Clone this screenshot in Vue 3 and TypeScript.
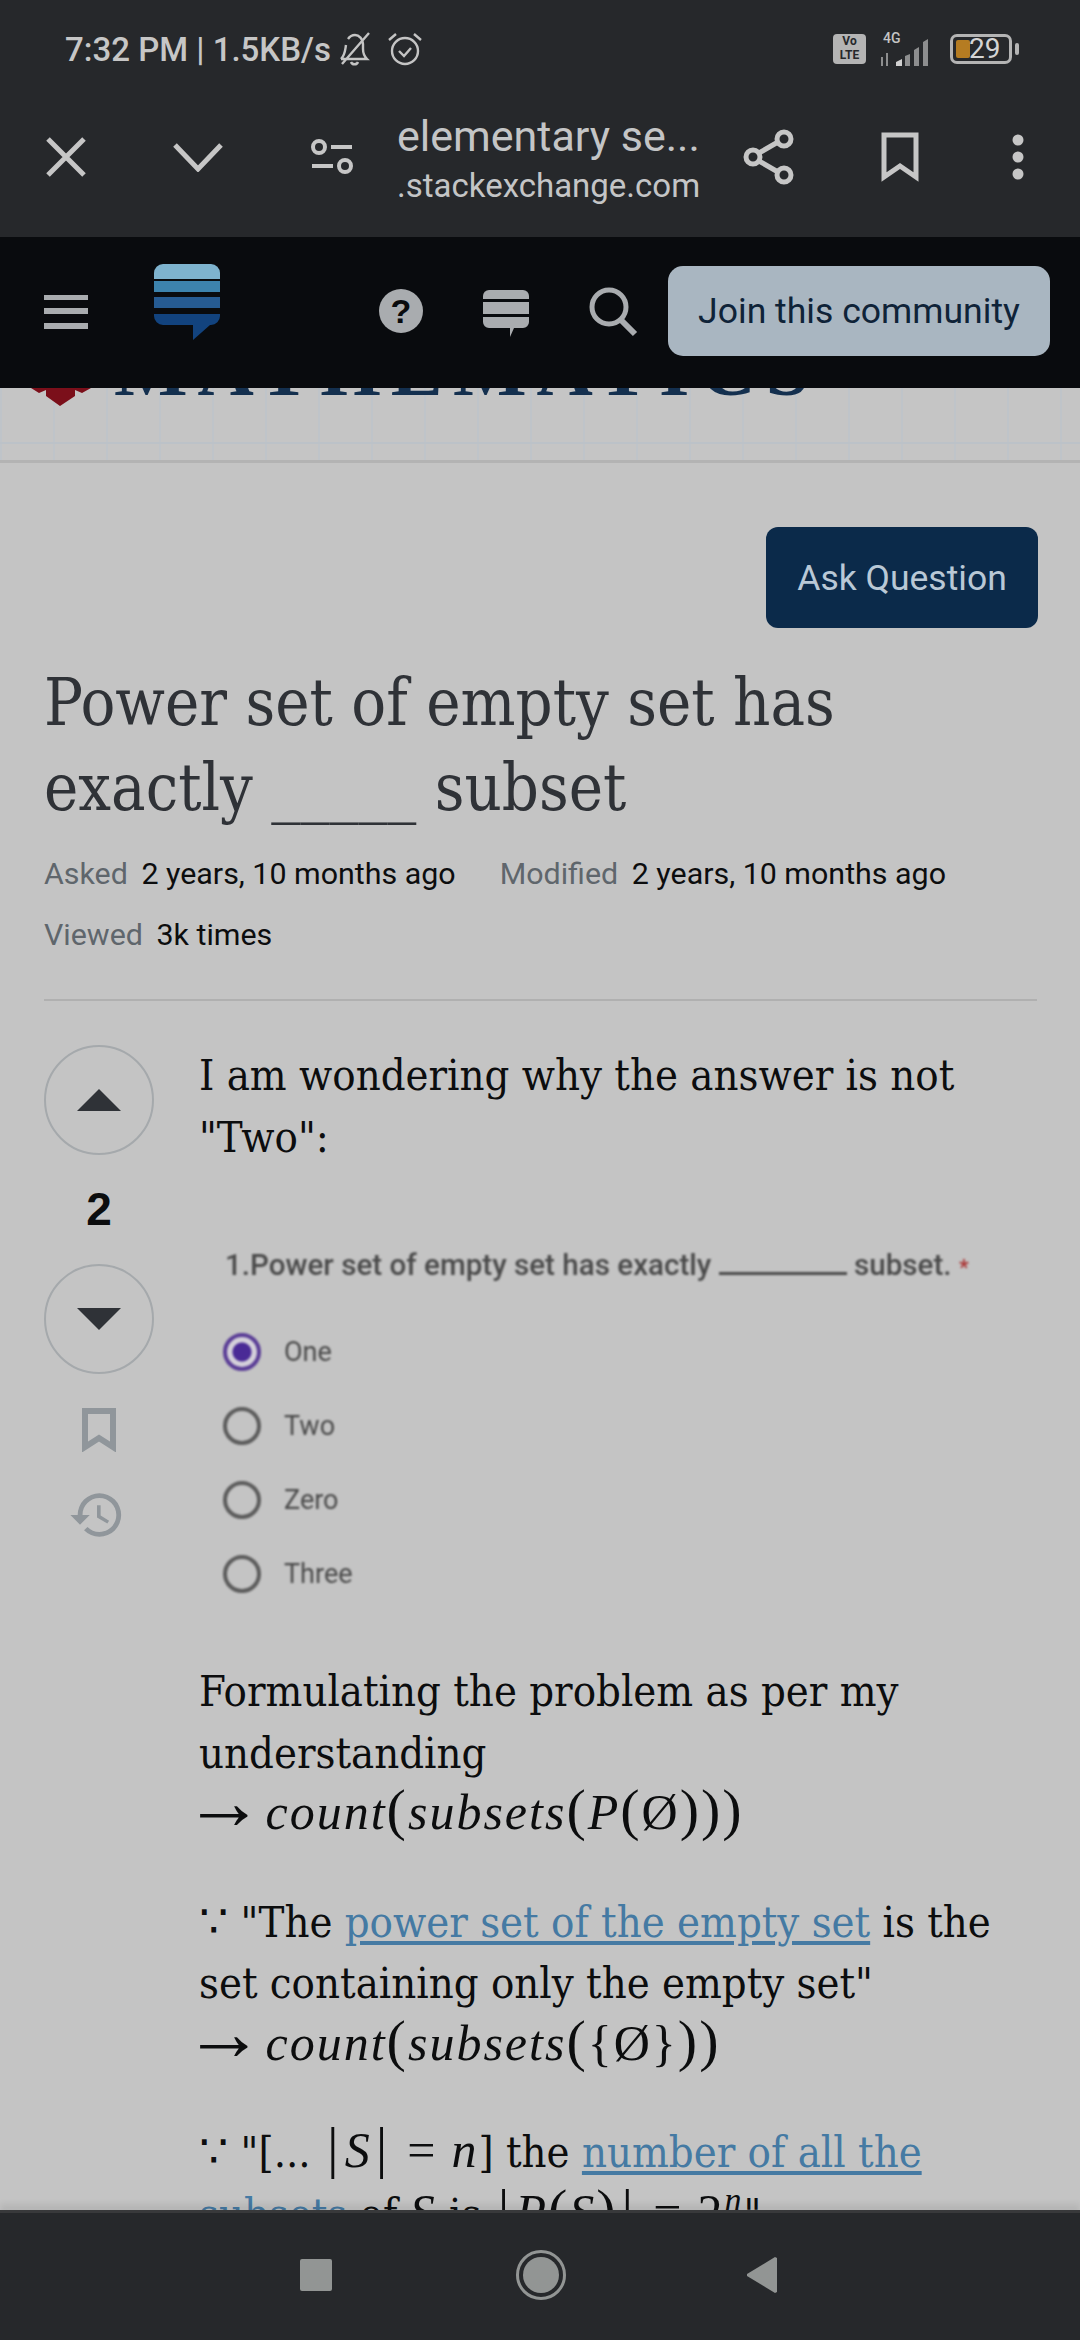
<template>
  <div class="page">
    <header class="browser">
      <div class="status">
        <span class="clock">7:32 PM | 1.5KB/s</span>
        <svg class="st-bell" width="34" height="36" viewBox="0 0 34 36" fill="none" stroke="#c4c4c4" stroke-width="2.4">
          <path d="M3 28h26c-3-3-4-6-4-10V13c0-5-4-9-8-9-3 0-5 1-7 4M8 14c-1 6-1 10-5 14M31 2 4 33" />
          <path d="M13 31c1 3 6 3 7 0" />
        </svg>
        <svg class="st-alarm" width="36" height="36" viewBox="0 0 36 36" fill="none" stroke="#c4c4c4" stroke-width="2.4">
          <circle cx="18" cy="20" r="13" />
          <path d="M12 20l5 5 7-8M2 9l7-6M34 9l-7-6" />
        </svg>
        <div class="st-right">
          <span class="volte">Vo<br />LTE</span>
          <svg width="58" height="36" viewBox="0 0 58 36" fill="#8d8e8f">
            <text x="5" y="12" class="four-g">4G</text>
            <path d="M3 26h2v9H3zM8 22h2v13H8z" />
            <path d="M18 35v-4l6-3v7z" fill="#d0d0d0" />
            <path d="M27 35V25l5-2v12zM36 35V19l5-3v19zM45 35V11l5-3v27z" />
          </svg>
          <div class="battery">
            <span class="battery-fill"></span>
            <span class="battery-num">29</span>
          </div>
          <span class="battery-tip"></span>
        </div>
      </div>
      <div class="toolbar">
        <svg class="tb-close" width="40" height="40" viewBox="0 0 40 40" stroke="#c6c6c6" stroke-width="5">
          <path d="M2 2l36 36M38 2 2 38" />
        </svg>
        <svg class="tb-chev" width="50" height="30" viewBox="0 0 50 30" fill="none" stroke="#c6c6c6" stroke-width="5">
          <path d="M2 3l23 24L48 3" />
        </svg>
        <svg class="tb-tune" width="42" height="36" viewBox="0 0 42 36" fill="none" stroke="#c6c6c6" stroke-width="4">
          <circle cx="8" cy="8" r="6" />
          <circle cx="34" cy="27" r="6" />
          <path d="M20 8h21M1 27h21" />
        </svg>
        <div class="tb-title">
          <div class="tb-main">elementary se...</div>
          <div class="tb-sub">.stackexchange.com</div>
        </div>
        <svg class="tb-share" width="52" height="56" viewBox="0 0 52 56" fill="none" stroke="#c6c6c6" stroke-width="5">
          <circle cx="41" cy="10" r="7" />
          <circle cx="41" cy="46" r="7" />
          <circle cx="10" cy="28" r="7" />
          <path d="M16 24l19-11M16 32l19 11" />
        </svg>
        <svg class="tb-mark" width="38" height="50" viewBox="0 0 38 50" fill="none" stroke="#c6c6c6" stroke-width="5">
          <path d="M3 3h32v42L19 34 3 45z" />
        </svg>
        <svg class="tb-dots" width="14" height="46" viewBox="0 0 14 46" fill="#c6c6c6">
          <circle cx="7" cy="6" r="5.5" />
          <circle cx="7" cy="23" r="5.5" />
          <circle cx="7" cy="40" r="5.5" />
        </svg>
      </div>
    </header>

    <nav class="site-nav">
      <svg class="nav-burger" width="44" height="34" viewBox="0 0 44 34" fill="#a9acaf">
        <rect y="0" width="44" height="5" />
        <rect y="13" width="44" height="6" />
        <rect y="28" width="44" height="6" />
      </svg>
      <svg class="nav-logo" width="66" height="76" viewBox="0 0 66 76">
        <path d="M0 9a9 9 0 0 1 9-9h48a9 9 0 0 1 9 9v6H0z" fill="#7eb3ce" />
        <rect y="17" width="66" height="11" fill="#3d83ad" />
        <rect y="33" width="66" height="11" fill="#265b92" />
        <path d="M0 50h66v2a9 9 0 0 1-9 9h-1L39 76V61H9a9 9 0 0 1-9-9z" fill="#12437e" />
      </svg>
      <svg class="nav-help" width="44" height="44" viewBox="0 0 44 44">
        <circle cx="22" cy="22" r="22" fill="#a9acaf" />
        <text x="22" y="34" class="help-mark">?</text>
      </svg>
      <svg class="nav-chat" width="46" height="48" viewBox="0 0 46 48" fill="#a9acaf">
        <path d="M0 7a6 6 0 0 1 6-6h34a6 6 0 0 1 6 6v3H0z" />
        <rect y="13" width="46" height="12" />
        <path d="M0 28h46v5a6 6 0 0 1-6 6h-9l-4 9v-9H6a6 6 0 0 1-6-6z" />
      </svg>
      <svg class="nav-search" width="50" height="50" viewBox="0 0 50 50" fill="none" stroke="#a9acaf" stroke-width="5">
        <circle cx="20" cy="20" r="17" />
        <path d="M31 32l15 15" stroke-width="6" />
      </svg>
      <button class="join">Join this community</button>
    </nav>

    <main class="scroll">
      <div class="band">
        <svg class="band-mark" width="60" height="18" viewBox="0 0 60 18">
          <path d="M0 0h60l-9 5-7-3v6L29 18 15 8V2L8 5z" fill="#7b0f1a" />
        </svg>
        <span class="band-name">MATHEMATICS</span>
      </div>

      <div class="ask-row">
        <button class="ask">Ask Question</button>
      </div>

      <h1 class="title">Power set of empty set has exactly _____ subset</h1>

      <div class="meta">
        <div class="meta-line">
          <span class="meta-item"><span class="meta-label">Asked</span> 2 years, 10 months ago</span>
          <span class="meta-item"><span class="meta-label">Modified</span> 2 years, 10 months ago</span>
        </div>
        <div class="meta-line">
          <span class="meta-item"><span class="meta-label">Viewed</span> 3k times</span>
        </div>
      </div>

      <div class="post">
        <aside class="votes">
          <div class="vote-btn">
            <span class="arrow-up"></span>
          </div>
          <div class="score">2</div>
          <div class="vote-btn">
            <span class="arrow-down"></span>
          </div>
          <svg class="side-mark" width="34" height="44" viewBox="0 0 34 44" fill="none" stroke="#90969b" stroke-width="6">
            <path d="M3 3h28v36L17 30 3 39z" />
          </svg>
          <svg class="side-hist" width="58" height="52" viewBox="0 1.5 24 21" fill="#90969b">
            <path d="M13 3a9 9 0 0 0-9 9H1l3.89 3.89.07.14L9 12H6c0-3.87 3.13-7 7-7s7 3.13 7 7-3.13 7-7 7c-1.93 0-3.68-.79-4.94-2.06l-1.42 1.42A8.954 8.954 0 0 0 13 21a9 9 0 0 0 0-18zm-1 5v5l4.28 2.54.72-1.21-3.5-2.08V8H12z" />
          </svg>
        </aside>

        <div class="body">
          <p>I am wondering why the answer is not "Two":</p>

          <div class="shot">
            <div class="shot-q">
              1.Power set of empty set has exactly <span class="blank"></span> subset. <span class="req">*</span>
            </div>
            <div class="shot-opts">
              <div v-for="opt in options" :key="opt" class="opt">
                <span :class="['radio', { on: opt === 'One' }]"></span>
                <span>{{ opt }}</span>
              </div>
            </div>
          </div>

          <p>
            Formulating the problem as per my understanding<br />
            <span class="math"><span class="arrow">→</span> count<span class="bp">(</span>subsets<span class="bp">(</span>P<span class="bp">(</span><span class="up">Ø</span><span class="bp">)))</span></span>
          </p>

          <p>
            <span class="because">∵</span> "The <a class="link">power set of the empty set</a> is the set containing only the empty set"<br />
            <span class="math"><span class="arrow">→</span> count<span class="bp">(</span>subsets<span class="bp">(</span><span class="up">{Ø}</span><span class="bp">))</span></span>
          </p>

          <p>
            <span class="because">∵</span> "[... <span class="math"><span class="bar">|</span>S<span class="bar">|</span><span class="up eq">=</span>n</span>] the <a class="link">number of all the subsets</a> of <span class="math">S</span> is <span class="math"><span class="bar">|</span>P<span class="bp">(</span>S<span class="bp">)</span><span class="bar">|</span><span class="up eq">=</span><span class="up">2</span><sup>n</sup></span>"
          </p>
        </div>
      </div>
    </main>

    <footer class="sys-nav">
      <span class="sys-square"></span>
      <span class="sys-home"><span></span></span>
      <svg width="32" height="36" viewBox="0 0 32 36" fill="#929594">
        <path d="M31 1v34l-2 1L1 19v-2L29 0z" />
      </svg>
    </footer>
  </div>
</template>

<script setup lang="ts">
const options: string[] = ['One', 'Two', 'Zero', 'Three']
</script>

<style>
html,
body {
  margin: 0;
  background: #c4c4c4;
}
</style>

<style scoped>
.page {
  width: 1080px;
  height: 2340px;
  display: flex;
  flex-direction: column;
  overflow: hidden;
  background: #c4c4c4;
  font-family: Roboto, sans-serif;
}

.browser {
  height: 237px;
  background: #26282b;
  flex-shrink: 0;
}

.status {
  height: 90px;
  padding: 8px 0 0 65px;
  box-sizing: border-box;
  display: flex;
  align-items: center;
  color: #c6c6c6;
}

.clock {
  font-size: 33px;
  font-weight: 500;
  white-space: nowrap;
  width: 270px;
}

.st-bell {
  margin-left: 3px;
}

.st-alarm {
  margin-left: 15px;
}

.st-right {
  margin-left: auto;
  margin-right: 61px;
  display: flex;
  align-items: center;
}

.volte {
  width: 33px;
  height: 30px;
  background: #b4b4b4;
  border-radius: 4px;
  color: #26282b;
  font-size: 12px;
  line-height: 14px;
  font-weight: 700;
  text-align: center;
  margin-right: 12px;
}

.four-g {
  font: 500 14px Roboto, sans-serif;
  fill: #c4c4c4;
}

.battery {
  position: relative;
  width: 56px;
  height: 24px;
  border: 3px solid #b4b4b4;
  border-radius: 7px;
  margin-left: 14px;
}

.battery-fill {
  position: absolute;
  left: 3px;
  top: 3px;
  bottom: 3px;
  width: 14px;
  background: #b57c22;
  border-radius: 2px;
}

.battery-num {
  position: absolute;
  left: 16px;
  top: -3px;
  font-size: 28px;
  line-height: 30px;
  color: #d4d4d4;
}

.battery-tip {
  width: 4px;
  height: 12px;
  margin-left: 3px;
  background: #b4b4b4;
  border-radius: 2px;
}

.toolbar {
  height: 147px;
  display: flex;
  align-items: center;
  padding-bottom: 14px;
  box-sizing: border-box;
}

.tb-close {
  margin-left: 46px;
}

.tb-chev {
  margin-left: 87px;
}

.tb-tune {
  margin-left: 88px;
}

.tb-title {
  margin-left: 44px;
  width: 346px;
  padding-top: 3px;
  color: #c4c5c6;
}

.tb-main {
  font-size: 43px;
  line-height: 52px;
  white-space: nowrap;
}

.tb-sub {
  font-size: 33px;
  line-height: 40px;
  margin-top: 4px;
  white-space: nowrap;
}

.tb-mark {
  margin-left: 86px;
}

.tb-dots {
  margin-left: 92px;
}

.site-nav {
  height: 151px;
  flex-shrink: 0;
  background: #090b0e;
  display: flex;
  align-items: center;
  box-sizing: border-box;
  padding-bottom: 2px;
}

.nav-burger {
  margin-left: 44px;
}

.nav-logo {
  margin-left: 66px;
  margin-top: -20px;
}

.nav-help {
  margin-left: 159px;
  margin-top: -2px;
}

.help-mark {
  font: 700 34px "Liberation Sans", sans-serif;
  fill: #090b0e;
  text-anchor: middle;
}

.nav-chat {
  margin-left: 60px;
  margin-top: 2px;
}

.nav-search {
  margin-left: 60px;
}

.join {
  margin-left: 29px;
  margin-top: -2px;
  width: 382px;
  height: 90px;
  border: 0;
  border-radius: 15px;
  background: #a9b6c1;
  color: #0f2338;
  font: 400 35.6px Roboto, sans-serif;
  padding: 0;
}

.scroll {
  flex: 1;
  min-height: 0;
  overflow: hidden;
}

.band {
  height: 72px;
  box-sizing: content-box;
  overflow: hidden;
  border-bottom: 3px solid #b3b3b3;
  display: flex;
  align-items: flex-start;
  background-color: #c5c5c5;
  background-image:
    linear-gradient(#bcc2c8, #bcc2c8),
    repeating-linear-gradient(90deg, #bfc4c9 0 2px, transparent 2px 53px);
  background-size: 100% 2px, 100% 100%;
  background-position: 0 54px, 0 0;
  background-repeat: no-repeat;
}

.band-mark {
  margin-left: 31px;
  flex-shrink: 0;
}

.band-name {
  margin-left: 23px;
  margin-top: -58px;
  font: 700 78px/78px "Liberation Serif", serif;
  letter-spacing: 10px;
  color: #14304f;
}

.ask-row {
  display: flex;
  justify-content: flex-end;
  padding: 64px 42px 0 0;
}

.ask {
  width: 272px;
  height: 101px;
  border: 0;
  border-radius: 12px;
  background: #0b2a4a;
  color: #b9c8d6;
  font: 400 35.5px Roboto, sans-serif;
  padding: 0;
}

.title {
  margin: 32px 43px 0 44px;
  font: 400 64.5px/85px "DejaVu Serif", serif;
  font-stretch: condensed;
  color: #2f3237;
}

.meta {
  margin: 13px 43px 0 44px;
  padding-bottom: 34px;
  border-bottom: 2px solid #b0b0b0;
}

.meta-line {
  height: 61px;
  display: flex;
  align-items: center;
  gap: 44px;
  font-size: 30.4px;
  color: #0c0d0e;
}

.meta-label {
  color: #5f666c;
  margin-right: 6px;
}

.post {
  display: flex;
  padding: 44px 43px 0 44px;
  gap: 45px;
}

.votes {
  width: 110px;
  flex-shrink: 0;
  display: flex;
  flex-direction: column;
  align-items: center;
}

.vote-btn {
  width: 110px;
  height: 110px;
  box-sizing: border-box;
  border: 2px solid #a5a9ac;
  border-radius: 50%;
  display: flex;
  align-items: center;
  justify-content: center;
}

.arrow-up {
  width: 0;
  height: 0;
  border-left: 22px solid transparent;
  border-right: 22px solid transparent;
  border-bottom: 22px solid #2f3237;
}

.arrow-down {
  width: 0;
  height: 0;
  border-left: 22px solid transparent;
  border-right: 22px solid transparent;
  border-top: 22px solid #2f3237;
}

.score {
  height: 109px;
  font: 700 46px/109px "Liberation Sans", sans-serif;
  color: #0c0d0e;
}

.side-mark {
  margin-top: 34px;
}

.side-hist {
  margin-top: 37px;
  margin-left: -4px;
}

.body {
  flex: 1;
  min-width: 0;
  font: 400 43.2px/61.5px "DejaVu Serif", serif;
  font-stretch: condensed;
  color: #0c0d0e;
}

.body p {
  margin: 0 0 46px;
}

.shot {
  margin: -22px 0 29px;
  height: 440px;
  padding: 50px 0 0 24px;
  box-sizing: border-box;
  font-family: Roboto, sans-serif;
  font-stretch: normal;
  color: #4a4a4a;
  filter: blur(0.8px);
}

.shot-q {
  font-size: 29.6px;
  font-weight: 500;
  line-height: 46px;
  white-space: nowrap;
  padding-left: 2px;
}

.blank {
  display: inline-block;
  width: 128px;
  border-bottom: 3px solid #4a4a4a;
}

.req {
  color: #a33;
  font-size: 22px;
}

.shot-opts {
  margin-top: 42px;
  display: flex;
  flex-direction: column;
  gap: 36px;
  font-size: 27px;
  line-height: 38px;
}

.opt {
  display: flex;
  align-items: center;
  gap: 23px;
}

.radio {
  width: 38px;
  height: 38px;
  box-sizing: border-box;
  border: 4px solid #5c5c5c;
  border-radius: 50%;
}

.radio.on {
  border-color: #5a3d96;
  background: radial-gradient(circle, #4a2a96 0 9px, #d4d0da 10px);
}

.math {
  font: italic 400 50px/30px "Liberation Serif", serif;
  font-stretch: normal;
  letter-spacing: 2px;
}

.up {
  font-style: normal;
}

.eq {
  margin: 0 14px;
}

.arrow {
  font: 400 80px/30px "Liberation Serif", serif;
  letter-spacing: 0;
  margin: 0 -13px 0 -15px;
}

.bp {
  font-style: normal;
  font-size: 58px;
  font-weight: 300;
}

.bar {
  font-style: normal;
  font-size: 58px;
  margin: 0 4px;
}

.math sup {
  font-size: 34px;
  line-height: 0;
}

.because {
  font-family: "DejaVu Sans", sans-serif;
  font-size: 46px;
  line-height: 0;
  font-stretch: normal;
}

.link {
  color: #457aa3;
  text-decoration: underline;
  text-decoration-thickness: 4px;
  text-underline-offset: 4px;
}

.sys-nav {
  height: 130px;
  flex-shrink: 0;
  box-sizing: border-box;
  background: #26282b;
  border-top: 3px solid #38393b;
  box-shadow: 0 -6px 6px rgba(0, 0, 0, 0.08);
  display: flex;
  align-items: center;
  justify-content: center;
  gap: 180px;
  position: relative;
  padding-right: 2px;
  padding-bottom: 3px;
}

.sys-square {
  width: 32px;
  height: 32px;
  margin-right: 4px;
  background: #929594;
  border-radius: 2px;
}

.sys-home {
  width: 50px;
  height: 50px;
  box-sizing: border-box;
  border: 3px solid #929594;
  border-radius: 50%;
  padding: 4px;
}

.sys-home span {
  display: block;
  width: 100%;
  height: 100%;
  border-radius: 50%;
  background: #929594;
}
</style>
